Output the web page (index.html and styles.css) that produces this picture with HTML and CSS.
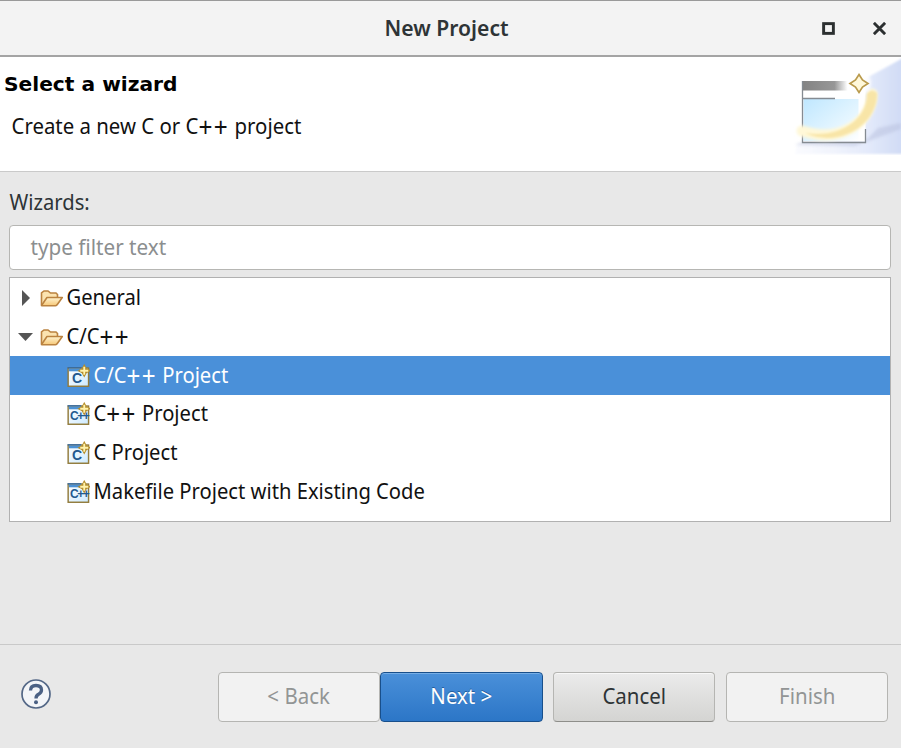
FILE: index.html
```html
<!DOCTYPE html>
<html lang="en">
<head>
<meta charset="utf-8">
<title>New Project</title>
<link rel="stylesheet" href="styles.css">
</head>
<body>
<svg width="0" height="0" class="defs">
  <defs>
    <linearGradient id="folderFill" x1="0" y1="0" x2="0" y2="1"><stop offset="0" stop-color="#fff3d0"/><stop offset="1" stop-color="#f6c878"/></linearGradient>
    <linearGradient id="fileFill" x1="0" y1="0" x2="1" y2="1"><stop offset="0" stop-color="#ffffff"/><stop offset="1" stop-color="#cdeaff"/></linearGradient>
    <symbol id="folder" viewBox="0 0 24 18">
      <path d="M1.500 16V4L4 2H8L10.500 4H16L17.500 5.500V8.500" fill="#fbe3b0" stroke="#bb8340" stroke-width="1.600"/>
      <path d="M1.500 16.500L7 8.500H22.300L17.500 15.200Q16.800 16.700 15.500 16.700H2Z" fill="url(#folderFill)" stroke="#bb8340" stroke-width="1.600" stroke-linejoin="round"/>
    </symbol>
    <symbol id="window" viewBox="0 0 24 24">
      <rect x="1.200" y="3.700" width="21.300" height="19" fill="url(#fileFill)" stroke="#927b3c" stroke-width="1.500"/>
      <path d="M.6 3.500H15" stroke="#2f68a5" stroke-width="1.400"/>
      <path d="M1.900 5.700H14" stroke="#4c91d4" stroke-width="2.800"/>
      <path d="M18 .8L20 4.500L23.700 6.500L20 8.500L18 12.200L16 8.500L12.300 6.500L16 4.500Z" fill="#b58e2d" stroke="#b58e2d" stroke-width="1.400"/>
      <path d="M18 2.300V10.700M13.800 6.500H22.200" stroke="#fff3ad" stroke-width="1.900"/>
    </symbol>
  </defs>
</svg>
<main class="dialog">
  <header class="titlebar">
    <h1 class="caption"><span class="t">New Project</span></h1>
    <div class="controls">
      <svg class="max" viewBox="0 0 12 12"><rect x="1.500" y="1.500" width="9" height="9" fill="none" stroke="#2b2f30" stroke-width="2.700"/></svg>
      <svg class="close" viewBox="0 0 12 12"><path d="M.8 .8L11.200 11.200M11.200 .8L.8 11.200" stroke="#2b2f30" stroke-width="2.700"/></svg>
    </div>
  </header>
  <section class="banner">
    <div class="intro">
      <h2>Select a wizard</h2>
      <p><span class="t">Create a new C or C<i>++</i> project</span></p>
    </div>
    <svg class="art" viewBox="0 0 108 98">
      <defs>
        <linearGradient id="beam" x1="0" y1="0" x2="1" y2="0"><stop offset="0" stop-color="#eef1fc" stop-opacity=".3"/><stop offset=".65" stop-color="#e5ebfb"/><stop offset="1" stop-color="#d0dbf5"/></linearGradient>
        <linearGradient id="bar" x1="0" y1="0" x2="1" y2="0"><stop offset="0" stop-color="#838383"/><stop offset=".55" stop-color="#979797"/><stop offset=".78" stop-color="#fff"/></linearGradient>
        <linearGradient id="pane" x1="0" y1="0" x2="1" y2="1"><stop offset="0" stop-color="#bfe7ff"/><stop offset=".65" stop-color="#e6f6ff"/><stop offset="1" stop-color="#fff"/></linearGradient>
        <filter id="soft" x="-30%" y="-30%" width="160%" height="160%"><feGaussianBlur stdDeviation="1.500"/></filter>
        <filter id="glow"><feGaussianBlur stdDeviation=".9"/></filter>
      </defs>
      <path d="M68 24L110 1V97H2L4 88L72 86Z" fill="url(#beam)" filter="url(#glow)"/>
      <path d="M2 88L12 84L74 82L85 71L108 66V72L62 89Z" fill="#b7bfdd" opacity=".5" filter="url(#soft)"/>
      <rect x="9.500" y="24" width="63" height="60.500" fill="#fff"/>
      <rect x="9.500" y="24" width="58" height="9.500" fill="url(#bar)"/>
      <rect x="10.500" y="42" width="55" height="42" fill="url(#pane)"/>
      <path d="M9.500 24V85.500H72.500V72M9.500 41.500H42" fill="none" stroke="#858b92" stroke-width="1.300"/>
      <path d="M79 37C78 64 50 87 9 74" fill="none" stroke="#fff8d8" stroke-width="11" stroke-linecap="round" filter="url(#soft)"/>
      <path d="M74 36Q79 31 84 36C85 66 48 92 12 76C47 82 75 62 74 36Z" fill="#f8e5a7" filter="url(#glow)"/>
      <circle cx="66" cy="26" r="12" fill="#fff" opacity=".85" filter="url(#soft)"/>
      <path d="M66 17.500L69.500 23L75 26.500L69.500 30L66 35.500L62.500 30L57 26.500L62.500 23Z" fill="#fff8da" stroke="#b99a4c" stroke-width="1.700"/>
    </svg>
  </section>
  <section class="content">
    <label class="label"><span class="t">Wizards:</span></label>
    <div class="filter"><span class="t">type filter text</span></div>
    <div class="tree">
      <div class="row"><svg class="arrow" viewBox="0 0 16 16"><path d="M5 0L13 8L5 16Z"/></svg><svg class="folder"><use href="#folder"/></svg><span class="t">General</span></div>
      <div class="row"><svg class="arrow" viewBox="0 0 16 16"><path d="M1 4H16L8.500 12Z"/></svg><svg class="folder"><use href="#folder"/></svg><span class="t">C/C<i>++</i></span></div>
      <div class="row child selected"><span class="icon"><svg><use href="#window"/></svg><b>C</b></span><span class="t">C/C<i>++</i> Project</span></div>
      <div class="row child"><span class="icon pp"><svg><use href="#window"/></svg><b>C++</b></span><span class="t">C<i>++</i> Project</span></div>
      <div class="row child"><span class="icon"><svg><use href="#window"/></svg><b>C</b></span><span class="t">C Project</span></div>
      <div class="row child"><span class="icon pp"><svg><use href="#window"/></svg><b>C++</b></span><span class="t">Makefile Project with Existing Code</span></div>
    </div>
  </section>
  <footer class="footer">
    <svg class="help" viewBox="0 0 32 32"><circle cx="16" cy="16" r="14" fill="#f3f5f8" stroke="#536786" stroke-width="1.700"/><path d="M10.500 12.500Q10.500 7.500 16 7.500Q21.500 7.500 21.500 12Q21.500 14.500 18.500 16.300Q16 17.700 16 20.500" fill="none" stroke="#4b6184" stroke-width="3.300"/><circle cx="16" cy="24.300" r="2" fill="#4b6184"/></svg>
    <div class="buttons">
      <button class="btn" disabled><span class="t">&lt; Back</span></button>
      <button class="btn primary"><span class="t">Next &gt;</span></button>
      <button class="btn normal"><span class="t">Cancel</span></button>
      <button class="btn" disabled><span class="t">Finish</span></button>
    </div>
  </footer>
</main>
</body>
</html>
```
FILE: styles.css
```css
* { box-sizing: border-box; }
body { margin: 0; background: #e8e8e8; color: #2e3436; font: 22px/30px "Noto Sans", sans-serif; }
h1, h2, p { margin: 0; }
.defs { position: absolute; }
.t { display: inline-block; white-space: nowrap; transform: translate(.5px, -2px) scaleX(.918); transform-origin: left center; }
.t i { font-style: normal; font-size: 1.2em; line-height: 0; vertical-align: -3px; letter-spacing: 1.5px; }
.dialog { width: 901px; height: 748px; display: flex; flex-direction: column; overflow: hidden; }
.titlebar { height: 57px; flex: none; display: grid; grid-template-columns: 1fr auto 1fr; align-items: center; background: #f3f3f3; border-top: 1px solid #999; border-bottom: 2px solid #a4a4a4; }
.caption { grid-column: 2; font-size: 22px; font-weight: 600; line-height: 30px; margin-right: 8px; }
.caption .t { transform: translateY(-1px) scaleX(.96); transform-origin: center; }
.controls { display: flex; justify-content: flex-end; gap: 38px; padding-right: 15px; }
.controls svg { width: 13px; height: 13px; }
.banner { height: 115px; flex: none; display: flex; justify-content: space-between; background: #fff; color: #111; border-bottom: 1px solid #cacaca; }
.intro { padding: 12px 0 0 4px; }
.intro h2 { font: bold 20.2px/30px "DejaVu Sans", sans-serif; color: #000; }
.intro p { padding: 12px 0 0 7px; }
.intro .t { transform: translate(.5px, -1px) scaleX(.927); }
.art { width: 108px; height: 98px; }
.content { flex: 1; padding: 16px 10px 0 9px; }
.label { display: block; height: 37px; }
.filter { height: 45px; padding: 7px 20px; background: #fff; color: #8b8e8f; border: 1px solid #b6b6b3; border-radius: 4px; }
.filter .t { transform: translate(.5px, -2px) scaleX(.94); }
.tree { height: 245px; margin-top: 7px; padding-top: 1px; background: #fff; color: #111; border: 1px solid #b1b1b1; }
.row { height: 38.7px; display: flex; align-items: center; padding-left: 7px; }
.arrow { width: 16px; height: 16px; margin-right: 7px; fill: #555; }
.folder { width: 24px; height: 18px; margin-right: 2px; }
.child { padding-left: 57px; }
.selected { background: #4a90d9; color: #fff; }
.icon { width: 23px; height: 24px; margin-right: 3px; display: grid; }
.icon > * { grid-area: 1 / 1; }
.icon svg { width: 23px; height: 24px; }
.icon b { font: bold 14px/17px "Liberation Sans", sans-serif; color: #23598f; padding: 6px 0 0 5px; }
.icon.pp b { font-size: 12px; letter-spacing: -1.500px; padding-left: 3px; }
.footer { height: 104px; flex: none; display: flex; justify-content: space-between; padding: 27px 13px 0 20px; border-top: 1px solid #c9c9c9; }
.help { width: 32px; height: 32px; margin-top: 6px; }
.buttons { display: flex; }
.btn { width: 162px; height: 50px; padding: 0; font: inherit; color: #929595; background: #f2f2f2; border: 1px solid #b5b5b2; border-radius: 4px; }
.btn .t { transform: translateY(-2px) scaleX(.93); transform-origin: center; }
.primary { width: 163px; color: #fff; background: linear-gradient(#4a90d9, #2c76c7); border-color: #184f8b; box-shadow: inset 0 1px #76aee6; text-shadow: 0 -1px #215d9c; }
.normal { margin: 0 11px 0 10px; color: #2e3436; background: linear-gradient(#ebebeb, #d4d4d2); border-bottom-color: #8e8e8a; box-shadow: inset 0 1px #f8f8f8; }
```
